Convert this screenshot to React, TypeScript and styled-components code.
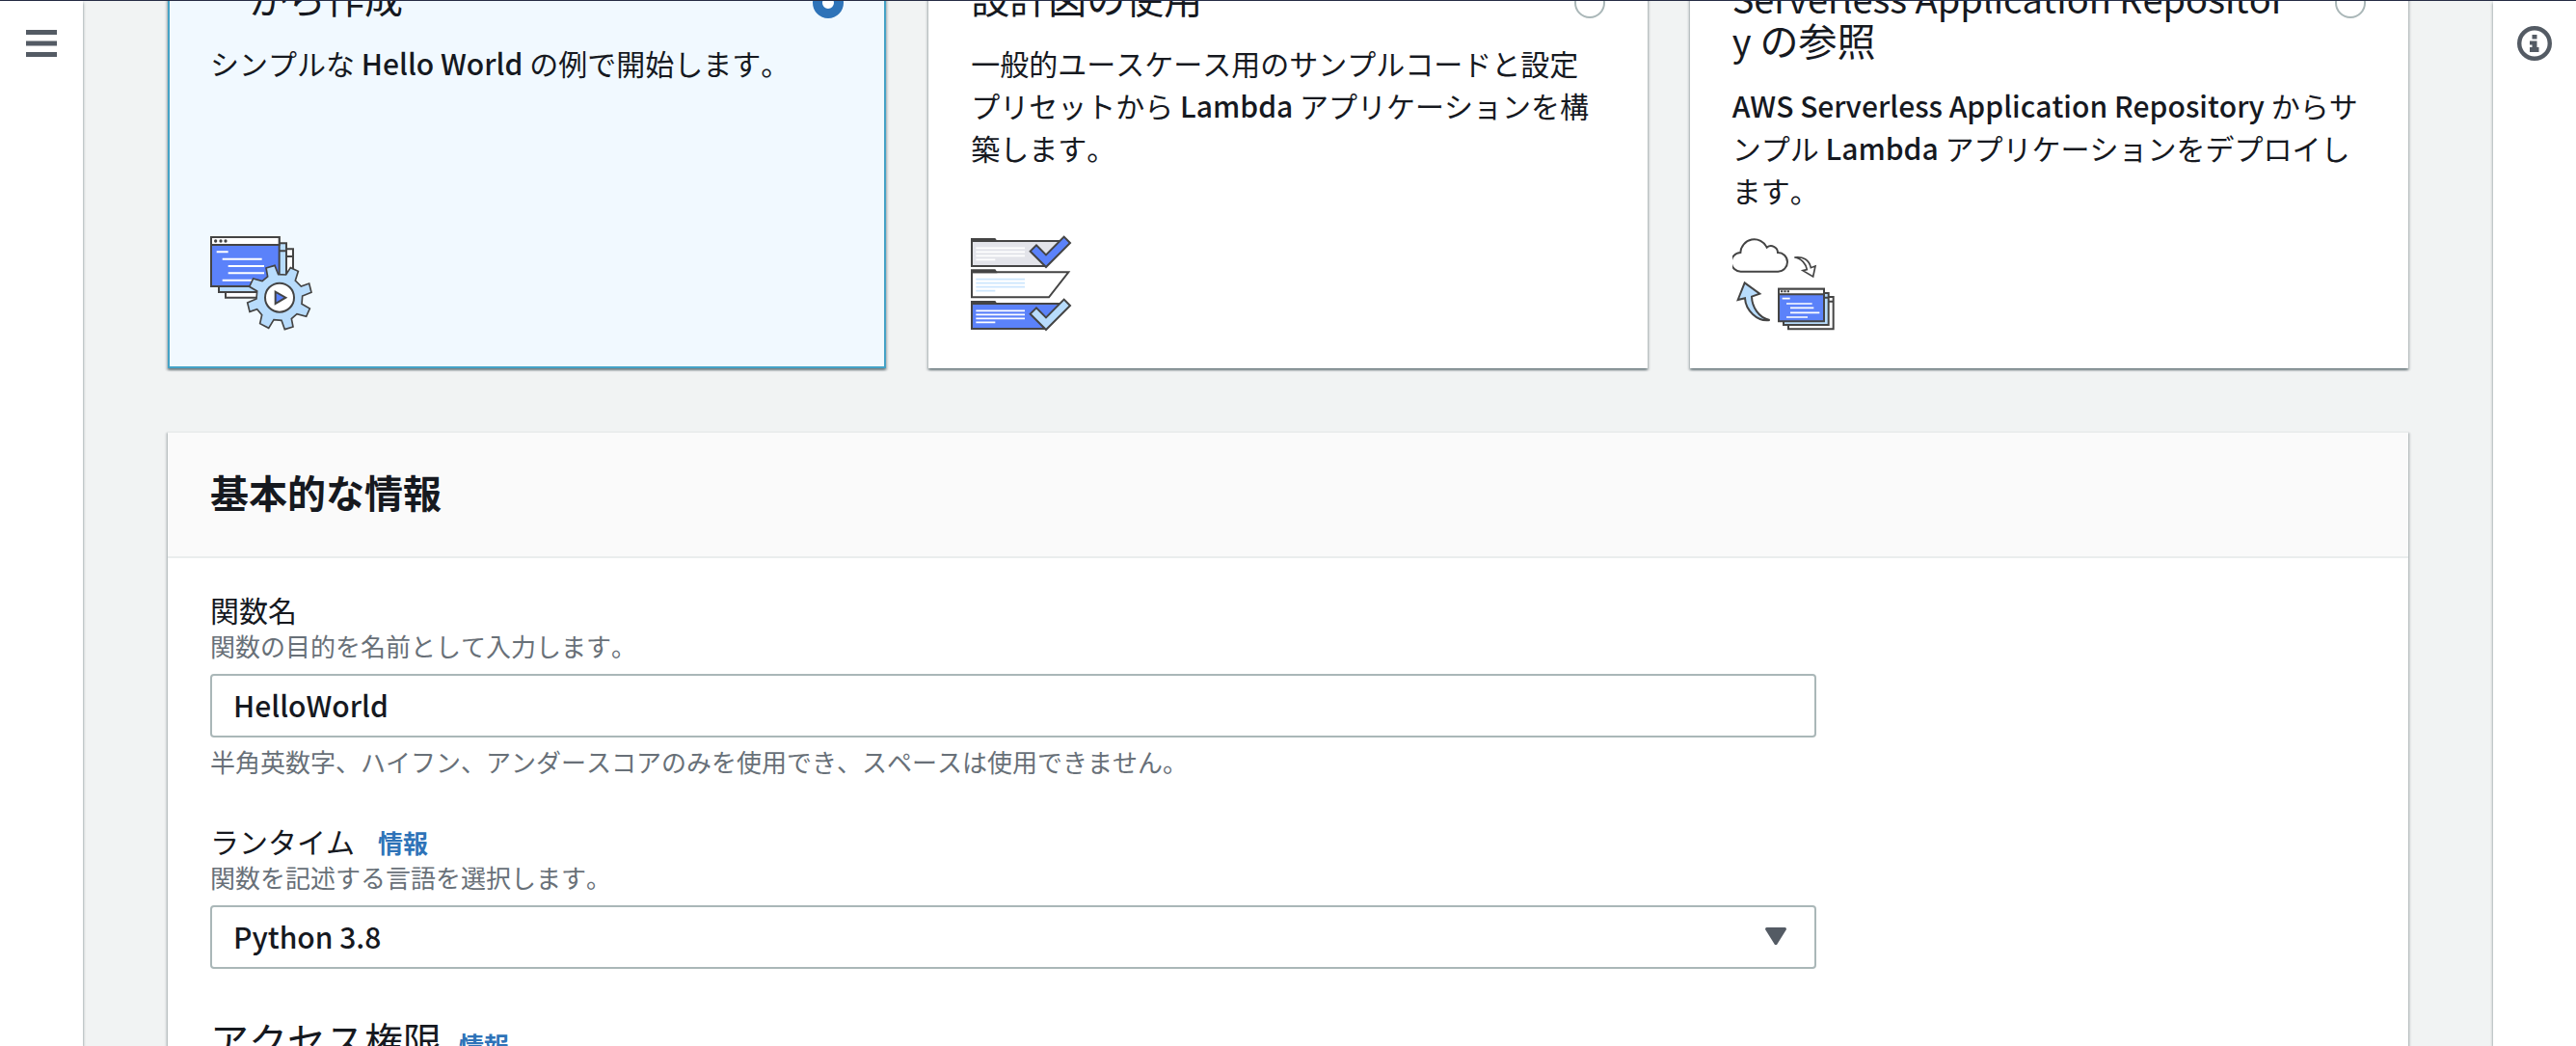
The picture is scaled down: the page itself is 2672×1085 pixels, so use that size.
import React, { useState } from "react";
import styled, { createGlobalStyle } from "styled-components";

const INK = "#16191f";
const MUTED = "#687078";
const LINE = "#aab7b8";
const BLUE = "#2e73b8";
const FONT = `"Noto Sans CJK JP", "Noto Sans", sans-serif`;

const GlobalStyle = createGlobalStyle`
  *, *::before, *::after { box-sizing: border-box; }
  body {
    margin: 0;
    overflow: hidden;
    background: #f1f3f3;
    color: ${INK};
    font-family: ${FONT};
    font-size: 30px;
    line-height: 44px;
    font-kerning: none;
  }
`;

const Shell = styled.div`
  display: flex;
  flex-direction: column;
  height: 100vh;
`;

const TopBar = styled.header`
  flex: none;
  height: 1px;
  background: #262c45;
`;

const Columns = styled.div`
  display: flex;
  flex: 1;
  min-height: 0;
`;

const SidePanel = styled.aside`
  flex: none;
  width: 86px;
  padding-top: 26px;
  display: flex;
  justify-content: center;
  align-items: flex-start;
  background: #fff;
  box-shadow: 0 2px 3px rgba(0, 28, 36, 0.5);
  z-index: 1;
`;

const IconButton = styled.button`
  display: flex;
  padding: 0;
  border: 0;
  background: none;
  color: #545b64;
  cursor: pointer;
`;

const Main = styled.main`
  flex: 1;
  min-width: 0;
  overflow: hidden;
  padding: 0 88px;
`;

/* The page is scrolled past the top of the option cards. */
const Scrolled = styled.form`
  display: flex;
  flex-direction: column;
  gap: 65px;
  margin-top: -67px;
`;

const Options = styled.div`
  display: grid;
  grid-template-columns: repeat(3, minmax(0, 1fr));
  gap: 44px;
`;

const surfaceShadow = `0 2px 2px rgba(0, 28, 36, 0.4), 2px 2px 2px rgba(0, 28, 36, 0.12), -2px 2px 2px rgba(0, 28, 36, 0.12)`;

const OptionCard = styled.label<{ $selected: boolean }>`
  display: flex;
  flex-direction: column;
  gap: 24px;
  padding: 39px 42px 35px;
  border: 2px solid ${(p) => (p.$selected ? "#44a2c6" : "#fff")};
  background: ${(p) => (p.$selected ? "#f1f9ff" : "#fff")};
  box-shadow: ${surfaceShadow};
  cursor: pointer;
`;

const OptionHead = styled.span`
  display: flex;
  justify-content: space-between;
  align-items: flex-start;
  gap: 44px;
`;

const OptionTitle = styled.span`
  font-size: 40px;
  line-height: 44px;
  word-break: break-all;
`;

const OptionText = styled.span`
  flex: 1;
`;

const Radio = styled.input`
  appearance: none;
  flex: none;
  width: 32px;
  height: 32px;
  margin: 12px 0 0;
  border: 2px solid ${LINE};
  border-radius: 50%;
  background: #fff;
  &:checked {
    border: 10px solid ${BLUE};
  }
`;

const Panel = styled.section`
  background: #fff;
  border-top: 2px solid #eaeded;
  box-shadow: ${surfaceShadow};
`;

const PanelHead = styled.div`
  padding: 37px 44px 43px;
  background: #fafafa;
  border-bottom: 2px solid #eaeded;
`;

const PanelTitle = styled.h2`
  margin: 0;
  font-size: 40px;
  line-height: 48px;
  font-weight: 700;
`;

const PanelBody = styled.div`
  display: grid;
  grid-template-columns: repeat(12, minmax(0, 1fr));
  gap: 44px;
  padding: 35px 44px 80px;
`;

const Field = styled.div`
  grid-column: span 9;
  display: flex;
  flex-direction: column;
`;

const LabelRow = styled.div`
  display: flex;
  align-items: baseline;
  gap: 24px;
  height: 36px;
  line-height: 36px;
`;

const Hint = styled.p`
  margin: 0;
  color: ${MUTED};
  font-size: 26px;
  line-height: 40px;
`;

const InfoLink = styled.a`
  color: ${BLUE};
  font-size: 26px;
  font-weight: 700;
  text-decoration: none;
`;

const controlStyle = `
  display: block;
  width: 100%;
  height: 66px;
  padding: 0 22px 2px;
  border: 2px solid ${LINE};
  border-radius: 4px;
  background: #fff;
  color: ${INK};
  font-family: ${FONT};
  font-size: 30px;
  font-weight: 500;
`;

const ControlSlot = styled.div`
  position: relative;
  margin: 9px 0 5px;
`;

const TextBox = styled.input`
  ${controlStyle}
`;

const Dropdown = styled.select`
  ${controlStyle}
  appearance: none;
`;

const Caret = styled.svg`
  position: absolute;
  top: 23px;
  right: 31px;
  pointer-events: none;
`;

const SectionRow = styled.div`
  grid-column: span 12;
  display: flex;
  align-items: baseline;
  gap: 18px;
`;

const SectionTitle = styled.h3`
  margin: 0;
  font-size: 40px;
  line-height: 48px;
  font-weight: 400;
`;

const Latin = styled.span`
  font-weight: 500;
`;

const TitleLatin = styled.span`
  font-size: 38px;
  line-height: 1;
`;

const MenuIcon = () => (
  <svg width="32" height="36" viewBox="0 0 32 36" fill="currentColor" aria-hidden="true">
    <path d="M0 4h32v5H0zM0 15.500h32v5H0zM0 27h32v5H0z" />
  </svg>
);

const InfoIcon = () => (
  <svg width="36" height="36" viewBox="0 0 36 36" fill="currentColor" aria-hidden="true">
    <circle cx="18" cy="18" r="15.800" fill="none" stroke="currentColor" strokeWidth="4.400" />
    <path d="M15.500 9h5v4.500h-5zM13 15.500h7.500v6.500h2v5h-9.500v-5h2.500v-2.500h-2.500z" />
  </svg>
);

const Artwork = ({ children }: { children: React.ReactNode }) => (
  <svg
    width="106"
    height="102"
    viewBox="54 45 318 306"
    fill="#fff"
    stroke="#444"
    strokeWidth="6"
    aria-hidden="true"
  >
    {children}
  </svg>
);

const ScratchArt = () => (
  <Artwork>
    <path d="M102 91h210v151H102zM102 114h210" />
    <path d="M81 73h210v152H81zM81 97h210" fill="#b8dcfc" />
    <path d="M57 54h212v153H57z" fill="#5b82fa" />
    <path d="M57 54h212v24H57z" />
    <g fill="#444" stroke="none">
      <circle cx="71" cy="66" r="5" />
      <circle cx="87" cy="66" r="5" />
      <circle cx="102" cy="66" r="5" />
    </g>
    <path d="M74 100h36M92 122h123M110 144h112M110 166h112M92 188h98" stroke="#fff" />
    <path
      d="M228 150L255 142L266 170L290 171L304 149L328 160L319 189L337 207L362 198L369 226L341 237L339 262L364 276L353 301L324 293L307 308L312 333L286 341L276 313L252 311L236 337L209 323L215 296L200 278L177 286L170 258L198 246L200 222L176 208L188 183L216 191L233 177Z"
      fill="#b8dcfc"
      strokeWidth="5"
    />
    <circle cx="270" cy="242" r="45" />
    <path d="M257 224v37L289 242z" fill="#5b82fa" />
  </Artwork>
);

const Folder = ({ y, fill, lines }: { y: number; fill: string; lines: string }) => (
  <g transform={`translate(0 ${y})`}>
    <path d="M57 66H358L297 144H57z" fill={fill} />
    <path d="M54 57h76l6 9v3H54z" fill="#444" stroke="none" />
    <path d="M70 88h152M70 100h152M70 112h152M70 124h60" stroke={lines} strokeWidth="5" />
  </g>
);

const Tick = ({ y, fill }: { y: number; fill: string }) => (
  <g transform={`translate(0 ${y})`}>
    <path d="M344 52L375 40V150H288z" fill="#fff" stroke="none" />
    <path d="M239 98L258 79L288 109L344 53L363 72L288 147z" fill={fill} />
  </g>
);

const BlueprintArt = () => (
  <Artwork>
    <Folder y={0} fill="#e3e4ea" lines="#fff" />
    <Tick y={0} fill="#5b82fa" />
    <Folder y={97} fill="#fff" lines="#cce6fd" />
    <Folder y={195} fill="#5b82fa" lines="#fff" />
    <Tick y={195} fill="#b8dcfc" />
  </Artwork>
);

const RepositoryArt = () => (
  <Artwork>
    <g transform="translate(5 0)">
      <path d="M76 161A29.500 29.500 0 0 1 74 102A43 43 0 0 1 156 86A21 21 0 0 1 190 102A29.500 29.500 0 0 1 191 161z" />
      <path d="M242 117C268 113 288 125 293 149L307 144L300 177L268 158L281 155C278 138 265 120 242 117z" strokeWidth="5" />
      <path d="M87 196L134 230L109 239C110 270 130 305 165 312C125 318 90 280 88 244L66 249z" fill="#b8dcfc" />
      <path d="M223 240h140v100H223zM223 254h140" />
      <path d="M208 228h140v99H208zM208 242h140" fill="#b8dcfc" />
      <path d="M193 215h141v101H193z" fill="#5b82fa" />
      <path d="M193 215h141v17H193z" />
      <path d="M199 223h7M209 223h7M219 223h7" />
      <path d="M204 245h24M217 261h80M229 274h73M229 289h91M217 303h66" stroke="#fff" strokeWidth="5" />
    </g>
  </Artwork>
);

const options = [
  {
    id: "scratch",
    title: "一から作成",
    text: <>シンプルな <Latin>Hello World</Latin> の例で開始します。</>,
    art: <ScratchArt />,
  },
  {
    id: "blueprint",
    title: "設計図の使用",
    text: (
      <>
        一般的ユースケース用のサンプルコードと設定プリセットから <Latin>Lambda</Latin> アプリケーションを構築します。
      </>
    ),
    art: <BlueprintArt />,
  },
  {
    id: "repository",
    title: <><TitleLatin>Serverless Application Repository</TitleLatin> の参照</>,
    text: (
      <>
        <Latin>AWS Serverless Application Repository</Latin> からサンプル <Latin>Lambda</Latin> アプリケーションをデプロイします。
      </>
    ),
    art: <RepositoryArt />,
  },
];

export default function App() {
  const [selected, setSelected] = useState("scratch");
  const [name, setName] = useState("HelloWorld");

  return (
    <>
      <GlobalStyle />
      <Shell lang="ja">
        <TopBar />
        <Columns>
          <SidePanel>
            <IconButton type="button" aria-label="メニュー">
              <MenuIcon />
            </IconButton>
          </SidePanel>
          <Main>
            <Scrolled>
              <Options role="radiogroup">
                {options.map((o) => (
                  <OptionCard key={o.id} $selected={selected === o.id}>
                    <OptionHead>
                      <OptionTitle>{o.title}</OptionTitle>
                      <Radio
                        type="radio"
                        name="method"
                        value={o.id}
                        checked={selected === o.id}
                        onChange={() => setSelected(o.id)}
                      />
                    </OptionHead>
                    <OptionText>{o.text}</OptionText>
                    {o.art}
                  </OptionCard>
                ))}
              </Options>
              <Panel>
                <PanelHead>
                  <PanelTitle>基本的な情報</PanelTitle>
                </PanelHead>
                <PanelBody>
                  <Field>
                    <LabelRow>
                      <label htmlFor="name">関数名</label>
                    </LabelRow>
                    <Hint>関数の目的を名前として入力します。</Hint>
                    <ControlSlot>
                      <TextBox id="name" value={name} onChange={(e) => setName(e.target.value)} />
                    </ControlSlot>
                    <Hint>半角英数字、ハイフン、アンダースコアのみを使用でき、スペースは使用できません。</Hint>
                  </Field>
                  <Field>
                    <LabelRow>
                      <label htmlFor="runtime">ランタイム</label>
                      <InfoLink href="#runtime">情報</InfoLink>
                    </LabelRow>
                    <Hint>関数を記述する言語を選択します。</Hint>
                    <ControlSlot>
                      <Dropdown id="runtime" defaultValue="python3.8">
                        <option value="python3.8">Python 3.8</option>
                      </Dropdown>
                      <Caret width="22" height="18" viewBox="0 0 22 18" aria-hidden="true">
                        <path d="M1.500 0h19q1.500 0 1.500 2L12 18h-2L0 2Q0 0 1.500 0z" fill="#545b64" />
                      </Caret>
                    </ControlSlot>
                  </Field>
                  <SectionRow>
                    <SectionTitle>アクセス権限</SectionTitle>
                    <InfoLink href="#permissions">情報</InfoLink>
                  </SectionRow>
                </PanelBody>
              </Panel>
            </Scrolled>
          </Main>
          <SidePanel>
            <IconButton type="button" aria-label="情報パネル">
              <InfoIcon />
            </IconButton>
          </SidePanel>
        </Columns>
      </Shell>
    </>
  );
}
